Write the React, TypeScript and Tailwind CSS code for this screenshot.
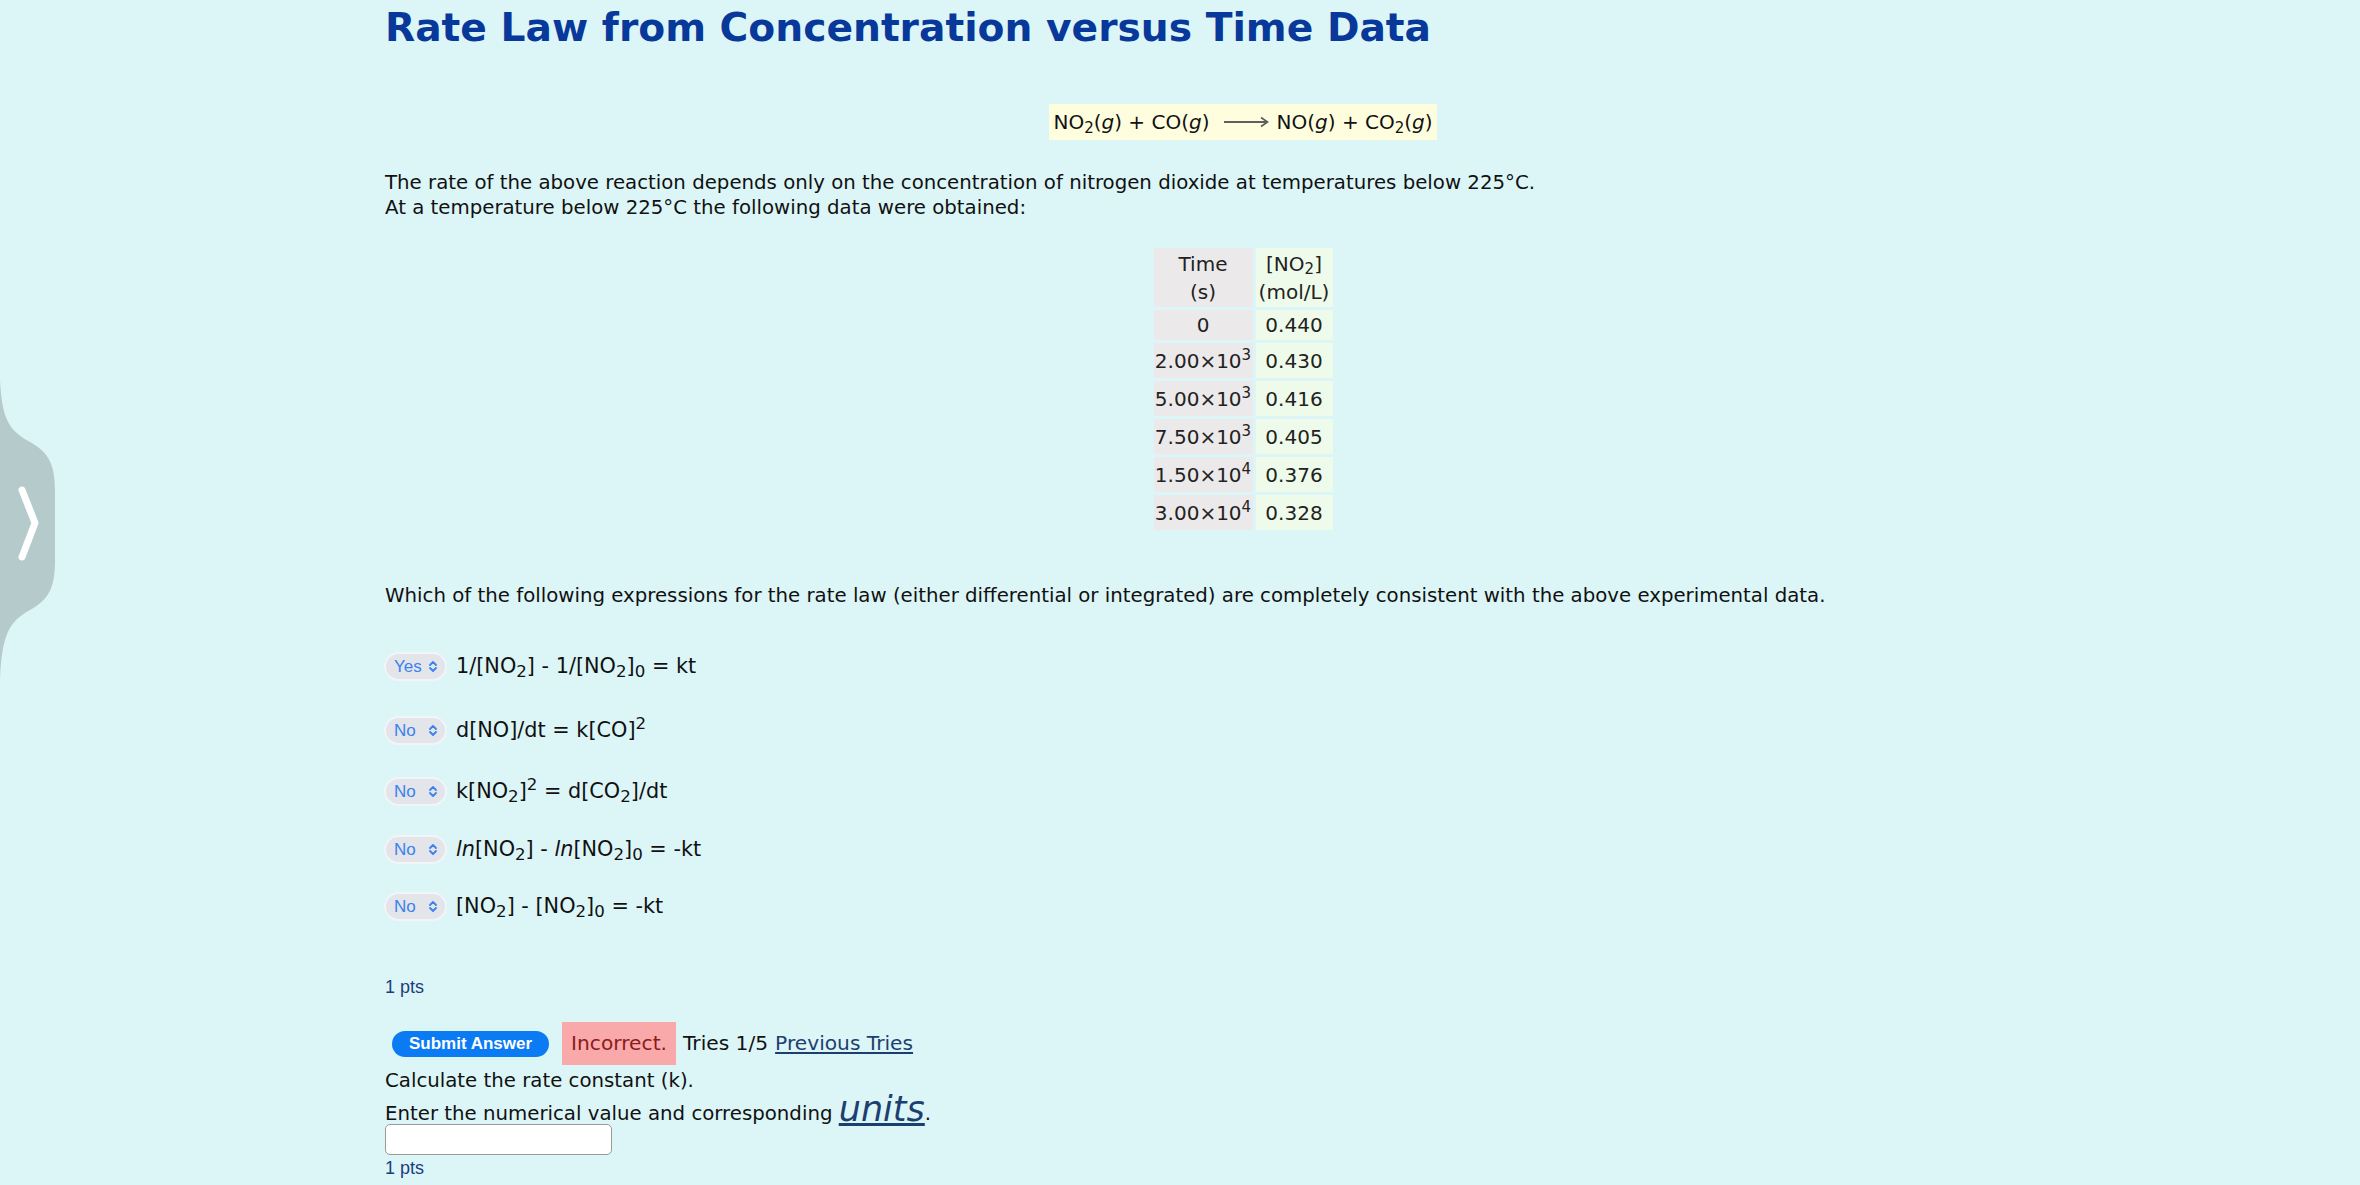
import React from "react";

const F = "font-['DejaVu_Sans',Verdana,sans-serif]";

function Sel({ v }: { v: string }) {
  return (
    <div className="flex h-[29px] w-[63px] shrink-0 items-center justify-between rounded-full border-2 border-[#f2f5f7] bg-[#e3e5ea] pl-[8px] pr-[7px] font-['Liberation_Sans',Arial,sans-serif] text-[17px] leading-none text-[#3a82ef]">
      <span>{v}</span>
      <svg width="10" height="13" viewBox="0 0 10 13" fill="none" stroke="#3a82ef" strokeWidth="1.8" strokeLinecap="round" strokeLinejoin="round">
        <path d="M2 5 L5 2 L8 5" />
        <path d="M2 8 L5 11 L8 8" />
      </svg>
    </div>
  );
}

function Row({ v, children, mt }: { v: string; children: React.ReactNode; mt: string }) {
  return (
    <div className={`-ml-[1px] flex h-[28px] items-center gap-[9px] ${mt}`}>
      <Sel v={v} />
      <div className="text-[20.8px] leading-[28px] text-[#111] [&_sub]:text-[80%] [&_sup]:text-[80%]">{children}</div>
    </div>
  );
}

const rows: [string, string, string][] = [
  ["0", "0.440", "h-[30px]"],
  ["2.00×10", "0.430", "h-[35px]"],
  ["5.00×10", "0.416", "h-[35px]"],
  ["7.50×10", "0.405", "h-[35px]"],
  ["1.50×10", "0.376", "h-[35px]"],
  ["3.00×10", "0.328", "h-[35px]"],
];
const exps = ["", "3", "3", "3", "4", "4"];

export default function App() {
  return (
    <div className={`relative h-[1185px] w-full overflow-hidden bg-[#dcf6f8] ${F}`}>
      {/* left side tab */}
      <svg className="absolute left-0 top-[380px]" width="60" height="300" viewBox="0 0 60 300">
        <path
          d="M0 0 C2 38 8 50 30 62 C50 73 55 86 55 112 L55 180 C55 206 50 219 30 230 C8 242 2 256 0 300 Z"
          fill="#b5cacb"
        />
        <polyline points="22,110 35,143 22,177" fill="none" stroke="#ffffff" strokeWidth="7" strokeLinecap="round" strokeLinejoin="round" />
      </svg>

      <div className="ml-[385px] flex w-[1716px] flex-col">
        <h1 className="mt-[4px] text-[39.2px] font-bold leading-[48px] text-[#07389a]">
          Rate Law from Concentration versus Time Data
        </h1>

        <div className="mx-auto mt-[52px] flex h-[36px] items-center bg-[#fefede] px-[4px] text-[20px] text-[#111]">
          <span>
            NO<sub>2</sub>(<i>g</i>) + CO(<i>g</i>)
          </span>
          <svg className="ml-[13px] mr-[8px]" width="46" height="12" viewBox="0 0 46 12">
            <line x1="1" y1="6" x2="44" y2="6" stroke="#5f5f5f" strokeWidth="2.2" />
            <path d="M38 1.5 L44.5 6 L38 10.5" fill="none" stroke="#5f5f5f" strokeWidth="1.8" />
          </svg>
          <span>
            NO(<i>g</i>) + CO<sub>2</sub>(<i>g</i>)
          </span>
        </div>

        <p className="mt-[30px] text-[19.75px] leading-[25px] text-[#111]">
          The rate of the above reaction depends only on the concentration of nitrogen dioxide at temperatures below 225°C.
          <br />
          At a temperature below 225°C the following data were obtained:
        </p>

        <table className="mx-auto mt-[25px] border-separate border-spacing-[3px] text-[20px] leading-[28px] text-[#222]">
          <thead>
            <tr>
              <th className="h-[59px] w-[99px] bg-[#ebe9ea] p-0 text-center font-normal">
                Time
                <br />
                (s)
              </th>
              <th className="w-[77px] bg-[#effbea] p-0 text-center font-normal">
                [NO<sub>2</sub>]
                <br />
                (mol/L)
              </th>
            </tr>
          </thead>
          <tbody>
            {rows.map(([t, c, h], i) => (
              <tr key={i} className={h}>
                <td className="bg-[#ebe9ea] p-0 text-center">
                  {t}
                  {exps[i] && <sup>{exps[i]}</sup>}
                </td>
                <td className="bg-[#effbea] p-0 text-center">{c}</td>
              </tr>
            ))}
          </tbody>
        </table>

        <p className="mt-[50px] text-[19.75px] leading-[25px] text-[#111]">
          Which of the following expressions for the rate law (either differential or integrated) are completely consistent with the above experimental data.
        </p>

        <Row v="Yes" mt="mt-[44px]">
          1/[NO<sub>2</sub>] - 1/[NO<sub>2</sub>]<sub>0</sub> = kt
        </Row>
        <Row v="No" mt="mt-[36px]">
          d[NO]/dt = k[CO]<sup>2</sup>
        </Row>
        <Row v="No" mt="mt-[33px]">
          k[NO<sub>2</sub>]<sup>2</sup> = d[CO<sub>2</sub>]/dt
        </Row>
        <Row v="No" mt="mt-[30px]">
          <i>ln</i>[NO<sub>2</sub>] - <i>ln</i>[NO<sub>2</sub>]<sub>0</sub> = -kt
        </Row>
        <Row v="No" mt="mt-[29px]">
          [NO<sub>2</sub>] - [NO<sub>2</sub>]<sub>0</sub> = -kt
        </Row>

        <div className="mt-[57px] font-['Liberation_Sans',Arial,sans-serif] text-[18px] leading-[20px] text-[#1b3d7d]">1 pts</div>

        <div className="mt-[25px] flex h-[43px] items-center text-[20.2px] text-[#111]">
          <button className="ml-[7px] h-[26px] rounded-full bg-[#0b7bf4] px-[17px] font-['Liberation_Sans',Arial,sans-serif] text-[17px] font-bold leading-[26px] text-white">
            Submit Answer
          </button>
          <div className="ml-[13px] flex h-[43px] items-center bg-[#f9a9a9] px-[9px] text-[#8a1c1c]">Incorrect.</div>
          <span className="ml-[7px]">Tries 1/5</span>
          <a className="ml-[7px] text-[#1d3f70] underline">Previous Tries</a>
        </div>

        <div className="mt-[3px] text-[19.75px] leading-[25px] text-[#111]">Calculate the rate constant (k).</div>
        <div className="flex h-[32px] items-end text-[19.75px] text-[#111]">
          <span className="leading-[22px]">Enter the numerical value and corresponding&nbsp;</span>
          <a className="text-[35px] italic leading-[32px] text-[#1d3f70] underline">units</a>
          <span className="leading-[22px]">.</span>
        </div>
        <input className="-mt-[1px] h-[31px] w-[227px] rounded-[5px] border border-[#9a9a9a] bg-white" />
        <div className="mt-[3px] font-['Liberation_Sans',Arial,sans-serif] text-[18px] leading-[20px] text-[#1b3d7d]">1 pts</div>
      </div>
    </div>
  );
}
